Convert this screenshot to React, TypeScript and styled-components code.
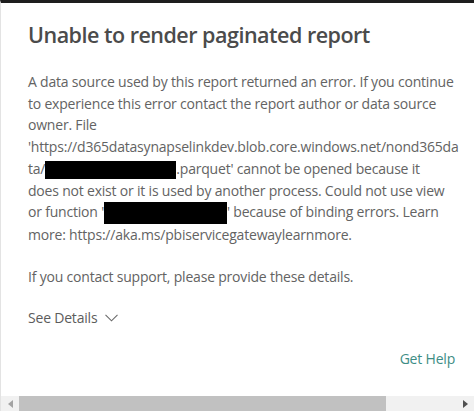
import styled, { createGlobalStyle } from 'styled-components';

const GlobalStyle = createGlobalStyle`
  html, body {
    margin: 0;
    padding: 0;
    background: #ffffff;
    overflow: hidden;
  }
  body {
    font-family: "Open Sans", "Noto Sans", "Liberation Sans", sans-serif;
  }
`;

const Frame = styled.div`
  width: 474px;
  height: 411px;
  display: flex;
  flex-direction: column;
  background: #ffffff;
  border-top: 3px solid #1e1e1e;
  border-left: 1px solid #e3e3e3;
  box-sizing: border-box;
`;

const Dialog = styled.div`
  flex: 1;
  display: flex;
  flex-direction: column;
  padding: 15px 0 0 27px;
`;

const Title = styled.h1`
  margin: 0;
  font-size: 21.5px;
  line-height: 34px;
  font-weight: 600;
  color: #4b4b4b;
  letter-spacing: -0.5px;
`;

const Message = styled.p`
  margin: 19px 0 0 0;
  font-size: 14px;
  line-height: 21.7px;
  color: #636363;
  letter-spacing: -0.2px;
`;

const Redacted = styled.span<{ $w: number; $h: number }>`
  display: inline-block;
  width: ${(p) => p.$w}px;
  height: ${(p) => p.$h}px;
  background: #000000;
  vertical-align: middle;
`;

const Support = styled.p`
  margin: 20px 0 0 0;
  font-size: 14px;
  line-height: 21px;
  color: #636363;
  letter-spacing: -0.2px;
`;

const DetailsToggle = styled.button`
  margin: 20px 0 0 0;
  padding: 0;
  border: none;
  background: none;
  align-self: flex-start;
  display: flex;
  align-items: center;
  gap: 8px;
  font-family: inherit;
  font-size: 14px;
  line-height: 21px;
  color: #5c5c5c;
  letter-spacing: -0.2px;
  cursor: pointer;
`;

const Footer = styled.div`
  margin-top: 20px;
  display: flex;
  justify-content: flex-end;
  padding-right: 19px;
`;

const HelpLink = styled.a`
  font-size: 14px;
  line-height: 21px;
  color: #3d8d85;
  text-decoration: none;
  letter-spacing: -0.2px;
  cursor: pointer;
`;

const ScrollBar = styled.div`
  height: 15px;
  display: flex;
  align-items: stretch;
  background: #f1f1f1;
`;

const Arrow = styled.div`
  width: 18px;
  display: flex;
  align-items: center;
  justify-content: center;
`;

const Thumb = styled.div`
  width: 367px;
  background: #c1c1c1;
`;

const Track = styled.div`
  flex: 1;
`;

export default function App() {
  return (
    <>
      <GlobalStyle />
      <Frame>
        <Dialog>
          <Title>Unable to render paginated report</Title>
          <Message>
            A data source used by this report returned an error. If you continue
            <br />
            to experience this error contact the report author or data source
            <br />
            owner. File
            <br />
            'https://d365datasynapselinkdev.blob.core.windows.net/nond365da
            <br />
            ta/<Redacted $w={131} $h={18} />.parquet' cannot be opened because it
            <br />
            does not exist or it is used by another process. Could not use view
            <br />
            or function '<Redacted $w={123} $h={22} />' because of binding errors. Learn
            <br />
            more: https://aka.ms/pbiservicegatewaylearnmore.
          </Message>
          <Support>If you contact support, please provide these details.</Support>
          <DetailsToggle>
            See Details
            <svg width="13" height="8" viewBox="0 0 13 8" fill="none">
              <path d="M0.5 0.8 L6.5 6.8 L12.5 0.8" stroke="#6a6a6a" strokeWidth="1.1" />
            </svg>
          </DetailsToggle>
          <Footer>
            <HelpLink>Get Help</HelpLink>
          </Footer>
        </Dialog>
        <ScrollBar>
          <Arrow>
            <svg width="5" height="8" viewBox="0 0 5 8">
              <path d="M5 0 L0 4 L5 8 Z" fill="#a3a3a3" />
            </svg>
          </Arrow>
          <Thumb />
          <Track />
          <Arrow>
            <svg width="5" height="8" viewBox="0 0 5 8">
              <path d="M0 0 L5 4 L0 8 Z" fill="#505050" />
            </svg>
          </Arrow>
        </ScrollBar>
      </Frame>
    </>
  );
}
